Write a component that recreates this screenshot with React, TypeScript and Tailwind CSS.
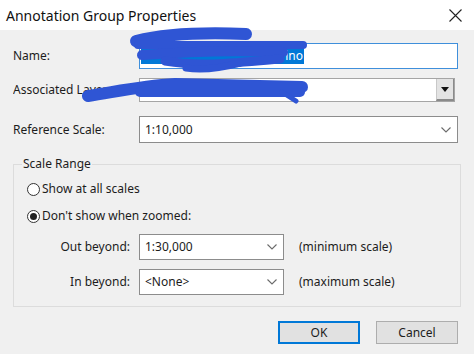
import React from "react";

const Chevron = () => (
  <svg width="10" height="6" viewBox="0 0 10 6" className="shrink-0">
    <path d="M0.5 0.5 L5 5 L9.5 0.5" fill="none" stroke="#6b6b6b" strokeWidth="1.1" />
  </svg>
);

const Select = ({ value, w, h }: { value: string; w: string; h: string }) => (
  <div className={`${w} ${h} bg-white border border-[#8c8c8c] flex items-center justify-between pl-[5px] pr-[6px]`}>
    <span className="text-[12px] text-[#1c1c1c]">{value}</span>
    <Chevron />
  </div>
);

const Radio = ({ checked, label }: { checked?: boolean; label: string }) => (
  <div className="flex items-center h-[16px]">
    <div className="w-[13px] h-[13px] rounded-full border border-[#333] bg-white flex items-center justify-center">
      {checked && <div className="w-[7px] h-[7px] rounded-full bg-[#222]" />}
    </div>
    <span className="ml-[2px] text-[12px] text-[#1c1c1c]">{label}</span>
  </div>
);

export default function App() {
  return (
    <div className="w-[474px] h-[356px] bg-white overflow-hidden relative font-['Noto_Sans','Segoe_UI',sans-serif] text-[#1c1c1c]">
      {/* Title bar */}
      <div className="h-[30px] flex items-center justify-between pl-[6px] pr-[12px]">
        <span className="text-[14px] text-[#111]">Annotation Group Properties</span>
        <svg width="13" height="13" viewBox="0 0 13 13">
          <path d="M0.5 0.5 L12.5 12.5 M12.5 0.5 L0.5 12.5" stroke="#222" strokeWidth="1.1" />
        </svg>
      </div>

      {/* Body */}
      <div className="h-[324px] bg-[#f0f0f0] flex flex-col pl-[13px] pr-[16px] pt-[13px]">
        {/* Name */}
        <div className="flex items-center h-[26px]">
          <span className="w-[126px] text-[12px]">Name:</span>
          <div className="w-[319px] h-[26px] bg-white border border-[#3f8fdb] flex items-center pl-[1px]">
            <span className="bg-[#0078d7] text-white text-[12px] leading-[16px] w-[163px] text-right pr-[1px]">ino</span>
          </div>
        </div>

        {/* Associated Layer */}
        <div className="flex items-center h-[24px] mt-[9px]">
          <span className="w-[126px] text-[12px] whitespace-nowrap overflow-hidden">Associated Layer:</span>
          <div className="w-[316px] h-[24px] bg-white border border-[#a5a5a5] flex items-stretch justify-end">
            <div className="w-[18px] bg-[#e3e3e3] border-l border-[#c8c8c8] border-b-[2px] border-r-[1px] border-b-[#8a8a8a] border-r-[#8a8a8a] flex items-center justify-center">
              <svg width="8" height="5" viewBox="0 0 8 5">
                <path d="M0 0 L8 0 L4 5 Z" fill="#111" />
              </svg>
            </div>
          </div>
        </div>

        {/* Reference Scale */}
        <div className="flex items-center h-[27px] mt-[14px]">
          <span className="w-[126px] text-[12px]">Reference Scale:</span>
          <Select value="1:10,000" w="w-[319px]" h="h-[27px]" />
        </div>

        {/* Scale Range group */}
        <fieldset className="mt-[13px] w-[448px] border border-[#dcdcdc] pl-[13px] pb-[11px]">
          <legend className="ml-[-5px] px-[1px] text-[12px] leading-[16px]">Scale Range</legend>
          <div className="mt-[9px] flex flex-col gap-[11px]">
            <Radio label="Show at all scales" />
            <Radio checked label="Don't show when zoomed:" />
          </div>
          <div className="mt-[10px] flex items-center h-[26px]">
            <span className="w-[103px] text-right text-[12px]">Out beyond:</span>
            <div className="ml-[9px]">
              <Select value="1:30,000" w="w-[145px]" h="h-[26px]" />
            </div>
            <span className="ml-[15px] text-[12px]">(minimum scale)</span>
          </div>
          <div className="mt-[9px] flex items-center h-[26px]">
            <span className="w-[103px] text-right text-[12px]">In beyond:</span>
            <div className="ml-[9px]">
              <Select value="<None>" w="w-[145px]" h="h-[26px]" />
            </div>
            <span className="ml-[15px] text-[12px]">(maximum scale)</span>
          </div>
        </fieldset>

        {/* Buttons */}
        <div className="mt-[14px] flex justify-end gap-[16px]">
          <button className="w-[82px] h-[23px] bg-[#e1e1e1] border-[2px] border-[#0078d7] text-[12px] text-[#1c1c1c]">OK</button>
          <button className="w-[82px] h-[23px] bg-[#e1e1e1] border border-[#adadad] text-[12px] text-[#1c1c1c]">Cancel</button>
        </div>
      </div>

      {/* Redaction scribbles over the dialog */}
      <svg className="absolute left-0 top-0 pointer-events-none" width="474" height="356" viewBox="0 0 474 356">
        <g fill="none" stroke="#2f55d4" strokeLinecap="round" strokeLinejoin="round">
          <path d="M136 41 C160 35 200 32 246 34" strokeWidth="12" />
          <path d="M138 45 L303 45" strokeWidth="8" />
          <path d="M142 55 C180 52 230 50 283 52" strokeWidth="10" />
          <path d="M165 61 C200 67 230 63 280 59" strokeWidth="9" />
          <path d="M186 68 C205 71 225 67 240 63" strokeWidth="7" />
          <path d="M88 96 C115 92 140 86 175 84 L302 87" strokeWidth="12" />
          <path d="M140 92 L300 92" strokeWidth="10" />
          <path d="M282 92 L296 101" strokeWidth="5" />
        </g>
      </svg>
    </div>
  );
}
